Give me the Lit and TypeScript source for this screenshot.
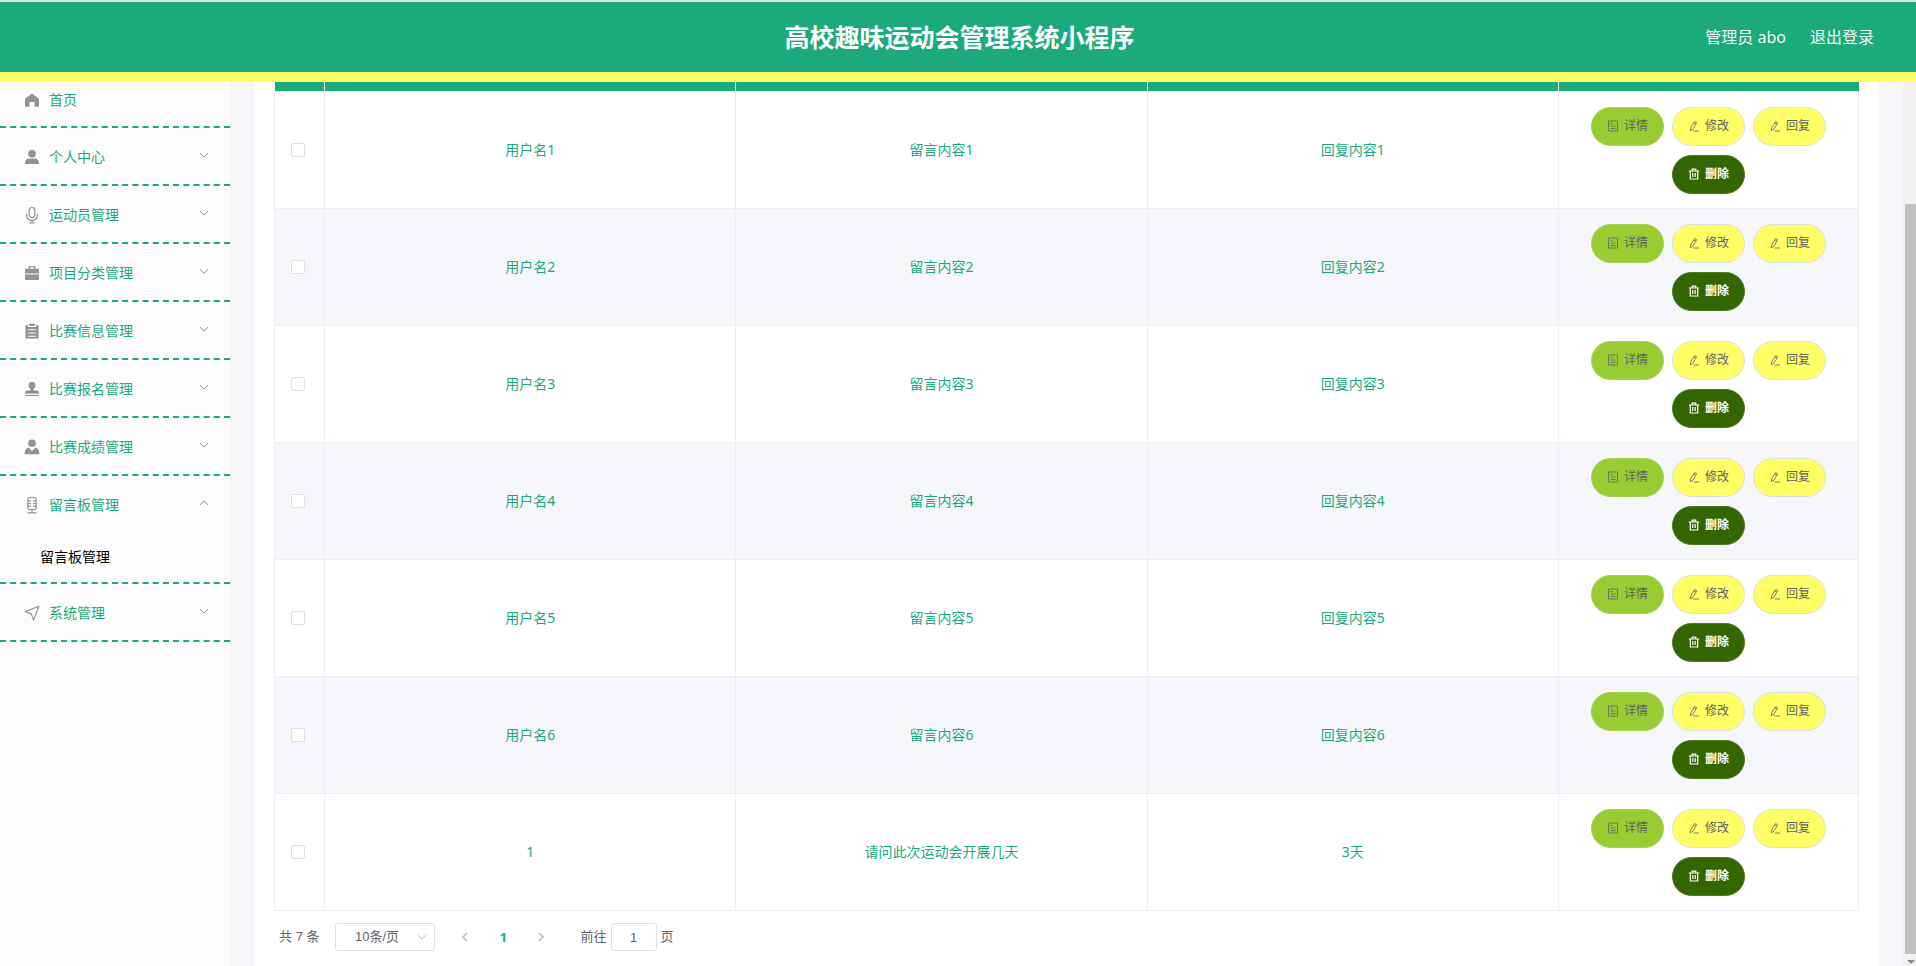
import { LitElement, html, css, svg, nothing } from "lit";
import { customElement, property, state } from "lit/decorators.js";
import { classMap } from "lit/directives/class-map.js";

const icons: Record<string, unknown> = {
  home: svg`<path d="M9 2.400 2.400 7.600A1 1 0 0 0 2 8.400V15a.7.700 0 0 0 .7.700H6.500V11h5v4.700h3.800A.7.700 0 0 0 16 15V8.400a1 1 0 0 0-.4-.8z"/>`,
  user: svg`<circle cx="9" cy="5.600" r="3.900"/><path d="M2 15.200c0-2.900 1.600-4.700 4.200-4.700h5.600c2.600 0 4.200 1.800 4.200 4.700 0 .6-.3.900-.9.900H2.900c-.6 0-.9-.3-.9-.9z"/>`,
  mic: svg`<g fill="none" stroke="currentColor" stroke-width="1.200"><rect x="6.200" y="1.500" width="5.600" height="10.200" rx="2.800"/><path d="M3.600 8v1.200a5.400 5.400 0 0 0 10.800 0V8M9 14.600v2M6.500 16.800h5"/></g>`,
  bag: svg`<path fill-rule="evenodd" d="M5.700 2h6.600v2.700H16v4.800H2V4.700h3.700zM7 3.200v1.500h4V3.200z"/><path d="M2 10.500h14v4.700a.8.800 0 0 1-.8.800H2.800a.8.800 0 0 1-.8-.8z"/>`,
  order: svg`<path fill-rule="evenodd" d="M2.500 3.200H5V5h8V3.200h2.500V16.500h-13zM5 7.300v1h8v-1zm0 3.200v1h8v-1zm0 3.200v1h8v-1z"/><path d="M6 1.800h6v2.200H6z"/>`,
  stamp: svg`<circle cx="9" cy="5.200" r="3.500"/><path d="M7.500 7h3v2.400c0 .8.500 1.200 1.300 1.200H14c1.300 0 2 .8 2 2.400v.7H2V13c0-1.600.7-2.400 2-2.400h2.200c.8 0 1.300-.4 1.300-1.200zM2.300 14.900h13.400V16H2.300z"/>`,
  custom: svg`<circle cx="9" cy="5.300" r="3.800"/><path d="M5.800 9.600 9 13.200l3.200-3.600c2.700.5 4.200 2.800 4.200 6.200a.5.500 0 0 1-.5.500H2.100a.5.500 0 0 1-.5-.5c0-3.400 1.500-5.700 4.200-6.200z"/>`,
  studio: svg`<g fill="none" stroke="currentColor" stroke-width="1.200"><rect x="4.800" y="1.500" width="8.400" height="12" rx="2"/><path d="M4.800 4.800h3M4.800 7.500h3M4.800 10.200h3M13.200 4.800h-3M13.200 7.500h-3M13.200 10.200h-3M9 13.500v3M4.500 16.800h9"/></g>`,
  send: svg`<path fill="none" stroke="currentColor" stroke-width="1.200" stroke-linejoin="round" d="M15.900 2.200 2.300 7.600l6 2.300 2.300 6.200z"/>`,
};

const tools: Record<string, unknown> = {
  detail: svg`<path d="M1.500 1h9v10h-9zM3.500 3.500h2M3.500 6h5M3.500 8.500h5"/>`,
  edit: svg`<path d="M6.600 1.600 8.700 2.700 5 9.200 2.300 10.800 2.700 7.900zM5.900 3l2 1.200M5.500 11h5.500"/>`,
  trash: svg`<path d="M.8 3h10.400M2.300 3v8h7.400V3M4.200 3V1.200h3.600V3M4.800 5v4M7.200 5v4"/>`,
};

interface Entry {
  icon: string;
  label: string;
  children?: string[];
}

interface Message {
  user: string;
  content: string;
  reply: string;
}

const entries: Entry[] = [
  { icon: "user", label: "个人中心", children: [] },
  { icon: "mic", label: "运动员管理", children: [] },
  { icon: "bag", label: "项目分类管理", children: [] },
  { icon: "order", label: "比赛信息管理", children: [] },
  { icon: "stamp", label: "比赛报名管理", children: [] },
  { icon: "custom", label: "比赛成绩管理", children: [] },
  { icon: "studio", label: "留言板管理", children: ["留言板管理"] },
  { icon: "send", label: "系统管理", children: [] },
];

const messages: Message[] = [
  ...[1, 2, 3, 4, 5, 6].map((n) => ({
    user: `用户名${n}`,
    content: `留言内容${n}`,
    reply: `回复内容${n}`,
  })),
  { user: "1", content: "请问此次运动会开展几天", reply: "3天" },
];

@customElement("side-menu")
export class SideMenu extends LitElement {
  @state() private open = "留言板管理";

  static styles = css`
    :host {
      display: block;
      background: #fcfcfc;
    }
    ul {
      list-style: none;
      margin: 0;
      padding: 0;
    }
    .entry {
      border-bottom: 2px dashed #1caa7c;
    }
    .row {
      box-sizing: border-box;
      display: flex;
      align-items: center;
      width: 100%;
      height: 56px;
      padding: 2px 20px 0;
      border: 0;
      background: none;
      color: #1caa7c;
      font: 14px/20px "Noto Sans", "Noto Sans CJK SC", sans-serif;
      text-align: left;
      text-decoration: none;
      cursor: pointer;
    }
    .home {
      height: 44px;
      padding-bottom: 10px;
    }
    .icon {
      width: 18px;
      height: 18px;
      margin: 0 8px 0 3px;
      fill: currentColor;
      color: #909399;
    }
    .label {
      flex: 1;
    }
    .arrow {
      width: 12px;
      height: 12px;
      margin-bottom: 4px;
      fill: none;
      stroke: #909399;
    }
    .up {
      transform: rotate(180deg);
    }
    .sub {
      display: flex;
      align-items: center;
      height: 50px;
      padding-left: 40px;
      color: #000;
      font: 14px/20px "Noto Sans", "Noto Sans CJK SC", sans-serif;
      text-decoration: none;
    }
  `;

  render() {
    return html`<nav>
      <ul>
        <li class="entry">
          <a class="row home" href="#home">
            <svg class="icon" viewBox="0 0 18 18">${icons.home}</svg>
            <span class="label">首页</span>
          </a>
        </li>
        ${entries.map((e) => {
          const open = e.label === this.open;
          return html`<li class="entry">
            <button
              class="row"
              aria-expanded=${open}
              @click=${() => (this.open = open ? "" : e.label)}
            >
              <svg class="icon" viewBox="0 0 18 18">${icons[e.icon]}</svg>
              <span class="label">${e.label}</span>
              <svg class=${classMap({ arrow: true, up: open })} viewBox="0 0 12 12">
                <path d="M1.800 4 6 8.200 10.200 4" />
              </svg>
            </button>
            ${open
              ? e.children?.map((c) => html`<a class="sub" href="#messages">${c}</a>`)
              : nothing}
          </li>`;
        })}
      </ul>
    </nav>`;
  }
}

@customElement("message-table")
export class MessageTable extends LitElement {
  @property({ attribute: false }) rows: Message[] = [];

  static styles = css`
    :host {
      display: block;
    }
    table {
      width: 100%;
      table-layout: fixed;
      border-collapse: separate;
      border-spacing: 0;
      border-left: 1px solid #ebeef5;
      color: #1caa7c;
      font: 14px/22px "Noto Sans", "Noto Sans CJK SC", sans-serif;
    }
    .c-check {
      width: 50px;
    }
    .c-ops {
      width: 300px;
    }
    th {
      height: 10px;
      padding: 0;
      background: #1caa7c;
      border-right: 1px solid #ebeef5;
      border-bottom: 1px solid #ebeef5;
      box-sizing: border-box;
    }
    th:last-child {
      border-right-color: #1caa7c;
    }
    td {
      box-sizing: border-box;
      height: 117px;
      padding: 0 10px;
      text-align: center;
      border-right: 1px solid #ebeef5;
      border-bottom: 1px solid #ebeef5;
      background: #fff;
    }
    tr:nth-child(even) td {
      background: #f5f7fa;
    }
    .check {
      padding: 0 16px;
      text-align: left;
    }
    input {
      appearance: none;
      display: block;
      box-sizing: border-box;
      width: 14px;
      height: 14px;
      margin: 0;
      border: 1px solid #dcdfe6;
      border-radius: 2px;
      background: #fff;
    }
    input:checked {
      background: #1caa7c;
    }
    .ops {
      display: flex;
      flex-wrap: wrap;
      justify-content: center;
      gap: 9px 8px;
    }
    button {
      display: flex;
      align-items: center;
      gap: 5px;
      box-sizing: border-box;
      height: 39px;
      padding: 0 15px;
      border: 1px solid #dcdfe6;
      border-radius: 20px;
      background: #ffff66;
      color: #606266;
      font: 12px/16px "Noto Sans", "Noto Sans CJK SC", sans-serif;
      cursor: pointer;
    }
    button svg {
      width: 12px;
      height: 12px;
      fill: none;
      stroke: currentColor;
      stroke-width: 0.8;
    }
    .detail {
      border-color: #a6d254;
      background: #99cc33;
    }
    .remove {
      border-color: #4a7a1c;
      background: #336600;
      color: #fff;
      font-weight: 700;
    }
    .remove svg {
      stroke-width: 1.2;
    }
  `;

  private op(kind: string, icon: string, label: string) {
    return html`<button class=${kind}>
      <svg viewBox="0 0 12 12">${tools[icon]}</svg><span>${label}</span>
    </button>`;
  }

  render() {
    return html`<table>
      <colgroup>
        <col class="c-check" />
        <col />
        <col />
        <col />
        <col class="c-ops" />
      </colgroup>
      <thead>
        <tr>
          <th aria-label="选择"></th>
          <th aria-label="用户名"></th>
          <th aria-label="留言内容"></th>
          <th aria-label="回复内容"></th>
          <th aria-label="操作"></th>
        </tr>
      </thead>
      <tbody>
        ${this.rows.map(
          (r) => html`<tr>
            <td class="check"><input type="checkbox" aria-label=${r.user} /></td>
            <td>${r.user}</td>
            <td>${r.content}</td>
            <td>${r.reply}</td>
            <td>
              <div class="ops">
                ${this.op("detail", "detail", "详情")} ${this.op("edit", "edit", "修改")}
                ${this.op("edit", "edit", "回复")} ${this.op("remove", "trash", "删除")}
              </div>
            </td>
          </tr>`
        )}
      </tbody>
    </table>`;
  }
}

@customElement("page-nav")
export class PageNav extends LitElement {
  @property({ type: Number }) total = 0;

  static styles = css`
    :host {
      display: flex;
      align-items: center;
      padding: 0 5px;
      color: #606266;
      font: 13px/28px "Liberation Sans", "Noto Sans CJK SC", sans-serif;
    }
    .size {
      display: grid;
      width: 100px;
      margin: 0 11px 0 16px;
    }
    select,
    input {
      appearance: none;
      box-sizing: border-box;
      height: 28px;
      margin: 0;
      border: 1px solid #dcdfe6;
      border-radius: 3px;
      background: #fff;
      color: #606266;
      font: inherit;
      line-height: 26px;
      text-align: center;
    }
    select {
      grid-area: 1 / 1;
      padding: 0 25px 0 8px;
      text-align-last: center;
    }
    svg {
      width: 12px;
      height: 12px;
      fill: none;
      stroke: #c0c4cc;
    }
    .down {
      grid-area: 1 / 1;
      place-self: center end;
      margin-right: 7px;
      pointer-events: none;
    }
    button {
      display: flex;
      align-items: center;
      justify-content: center;
      width: 28px;
      height: 28px;
      margin: 0 5px;
      padding: 0;
      border: 0;
      background: none;
      color: #1caa7c;
      font: bold 13px/28px "Noto Sans", sans-serif;
    }
    button svg {
      stroke: #b4b8c0;
      stroke-width: 1.5;
    }
    .jump {
      display: flex;
      gap: 4px;
      margin-left: 20px;
    }
    input {
      width: 46px;
      padding: 0 3px;
    }
  `;

  render() {
    return html`
      <span>共 ${this.total} 条</span>
      <span class="size">
        <select aria-label="每页条数">
          <option>10条/页</option>
          <option>20条/页</option>
          <option>50条/页</option>
        </select>
        <svg class="down" viewBox="0 0 12 12"><path d="M2 4l4 4 4-4" /></svg>
      </span>
      <button aria-label="上一页" disabled>
        <svg viewBox="0 0 12 12"><path d="M8 2 4 6l4 4" /></svg>
      </button>
      <button class="current" aria-current="page">1</button>
      <button aria-label="下一页" disabled>
        <svg viewBox="0 0 12 12"><path d="M4 2l4 4-4 4" /></svg>
      </button>
      <label class="jump">前往<input type="text" inputmode="numeric" value="1" />页</label>
    `;
  }
}

@customElement("app-root")
export class AppRoot extends LitElement {
  static styles = css`
    :host {
      display: flex;
      flex-direction: column;
      height: 100vh;
      overflow: hidden;
      background: #f5f7fa;
      font-family: "Noto Sans", "Noto Sans CJK SC", sans-serif;
    }
    header {
      display: grid;
      grid-template-columns: 1fr auto 1fr;
      align-items: center;
      flex: none;
      height: 70px;
      padding: 0 42px 0 45px;
      border-top: 2px solid #d9e8e2;
      border-bottom: 10px solid #ffff66;
      background: #1caa7c;
      color: #fff;
    }
    h1 {
      grid-column: 2;
      margin: 0;
      font-size: 25px;
      line-height: 36px;
      font-weight: 700;
    }
    .account {
      display: flex;
      justify-content: flex-end;
      gap: 24px;
      color: #eef8f4;
      font-size: 16px;
      line-height: 24px;
    }
    .account a {
      color: inherit;
      text-decoration: none;
    }
    .body {
      flex: 1;
      min-height: 0;
      display: flex;
    }
    side-menu {
      flex: none;
      width: 230px;
    }
    main {
      flex: 1;
      min-width: 0;
      margin: 0 24px;
      padding: 0 20px;
      background: #fff;
    }
    page-nav {
      margin-top: 12px;
    }
    .scroll {
      flex: none;
      display: flex;
      flex-direction: column;
      align-items: center;
      width: 11px;
      padding-left: 2px;
      background: #f1f1f1;
    }
    .thumb {
      width: 100%;
      flex: 1;
      margin-top: 122px;
      background: #c1c1c1;
    }
    .tip {
      width: 8px;
      height: 4px;
      margin: 6px 0 2px;
      fill: #8a8a8a;
    }
  `;

  render() {
    return html`
      <header>
        <h1>高校趣味运动会管理系统小程序</h1>
        <div class="account">
          <span>管理员 abo</span>
          <a href="#logout">退出登录</a>
        </div>
      </header>
      <div class="body">
        <side-menu></side-menu>
        <main>
          <message-table .rows=${messages}></message-table>
          <page-nav .total=${messages.length}></page-nav>
        </main>
        <div class="scroll" aria-hidden="true">
          <div class="thumb"></div>
          <svg class="tip" viewBox="0 0 8 4"><path d="M0 0h8L4 4z" /></svg>
        </div>
      </div>
    `;
  }
}
